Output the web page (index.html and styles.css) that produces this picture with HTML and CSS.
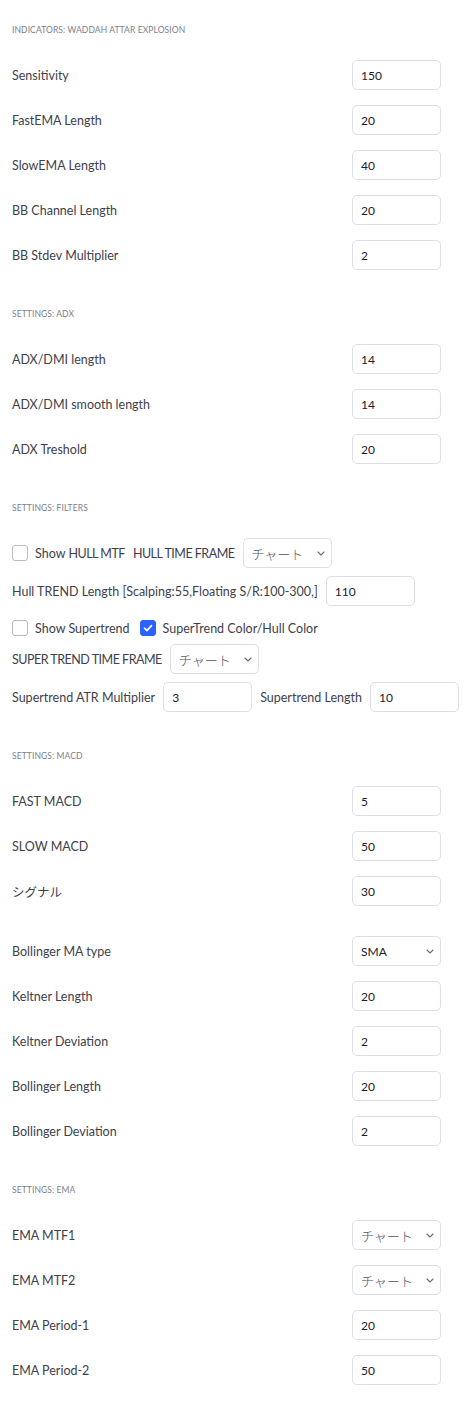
FILE: index.html
```html
<!DOCTYPE html>
<html lang="ja">
<head>
<meta charset="utf-8">
<title>Inputs</title>
<link rel="stylesheet" href="styles.css">
</head>
<body>
<div class="panel">

  <div class="section first">
    <div class="head">INDICATORS: WADDAH ATTAR EXPLOSION</div>
    <div class="rows">
      <div class="row"><span class="label">Sensitivity</span><div class="field">150</div></div>
      <div class="row"><span class="label">FastEMA Length</span><div class="field">20</div></div>
      <div class="row"><span class="label">SlowEMA Length</span><div class="field">40</div></div>
      <div class="row"><span class="label">BB Channel Length</span><div class="field">20</div></div>
      <div class="row"><span class="label">BB Stdev Multiplier</span><div class="field">2</div></div>
    </div>
  </div>

  <div class="section">
    <div class="head">SETTINGS: ADX</div>
    <div class="rows">
      <div class="row"><span class="label">ADX/DMI length</span><div class="field">14</div></div>
      <div class="row"><span class="label">ADX/DMI smooth length</span><div class="field">14</div></div>
      <div class="row"><span class="label">ADX Treshold</span><div class="field">20</div></div>
    </div>
  </div>

  <div class="section">
    <div class="head">SETTINGS: FILTERS</div>
    <div class="filters">
      <div class="inline">
        <span class="check"></span><span class="label">Show <span class="caps">HULL MTF</span></span>
        <span class="label caps">HULL TIME FRAME</span>
        <div class="field select"><span class="jp">チャート</span><svg class="chev" viewBox="0 0 8 5" width="8" height="5"><path d="M1 1l3 3 3-3" fill="none" stroke="#6a6d78" stroke-width="1.1" stroke-linecap="round" stroke-linejoin="round"/></svg></div>
      </div>
      <div class="inline">
        <span class="label">Hull TREND Length [Scalping:55,Floating S/R:100-300,]</span>
        <div class="field">110</div>
      </div>
      <div class="inline checks">
        <span class="check"></span><span class="label">Show Supertrend</span>
        <span class="check on"><svg viewBox="0 0 16 16" width="16" height="16"><path d="M4.5 8.2l2.4 2.4 4.6-5" fill="none" stroke="#fff" stroke-width="1.6" stroke-linecap="round" stroke-linejoin="round"/></svg></span><span class="label">SuperTrend Color/Hull Color</span>
      </div>
      <div class="inline tf">
        <span class="label caps">SUPER TREND TIME FRAME</span>
        <div class="field select"><span class="jp">チャート</span><svg class="chev" viewBox="0 0 8 5" width="8" height="5"><path d="M1 1l3 3 3-3" fill="none" stroke="#6a6d78" stroke-width="1.1" stroke-linecap="round" stroke-linejoin="round"/></svg></div>
      </div>
      <div class="inline">
        <span class="label">Supertrend ATR Multiplier</span>
        <div class="field">3</div>
        <span class="label">Supertrend Length</span>
        <div class="field">10</div>
      </div>
    </div>
  </div>

  <div class="section">
    <div class="head">SETTINGS: MACD</div>
    <div class="rows">
      <div class="row"><span class="label">FAST MACD</span><div class="field">5</div></div>
      <div class="row"><span class="label">SLOW MACD</span><div class="field">50</div></div>
      <div class="row"><span class="label">シグナル</span><div class="field">30</div></div>
    </div>
    <div class="rows gapped">
      <div class="row"><span class="label">Bollinger MA type</span><div class="field select"><span>SMA</span><svg class="chev" viewBox="0 0 8 5" width="8" height="5"><path d="M1 1l3 3 3-3" fill="none" stroke="#6a6d78" stroke-width="1.1" stroke-linecap="round" stroke-linejoin="round"/></svg></div></div>
      <div class="row"><span class="label">Keltner Length</span><div class="field">20</div></div>
      <div class="row"><span class="label">Keltner Deviation</span><div class="field">2</div></div>
      <div class="row"><span class="label">Bollinger Length</span><div class="field">20</div></div>
      <div class="row"><span class="label">Bollinger Deviation</span><div class="field">2</div></div>
    </div>
  </div>

  <div class="section">
    <div class="head">SETTINGS: EMA</div>
    <div class="rows">
      <div class="row"><span class="label">EMA MTF1</span><div class="field select"><span class="jp">チャート</span><svg class="chev" viewBox="0 0 8 5" width="8" height="5"><path d="M1 1l3 3 3-3" fill="none" stroke="#6a6d78" stroke-width="1.1" stroke-linecap="round" stroke-linejoin="round"/></svg></div></div>
      <div class="row"><span class="label">EMA MTF2</span><div class="field select"><span class="jp">チャート</span><svg class="chev" viewBox="0 0 8 5" width="8" height="5"><path d="M1 1l3 3 3-3" fill="none" stroke="#6a6d78" stroke-width="1.1" stroke-linecap="round" stroke-linejoin="round"/></svg></div></div>
      <div class="row"><span class="label">EMA Period-1</span><div class="field">20</div></div>
      <div class="row"><span class="label">EMA Period-2</span><div class="field">50</div></div>
    </div>
  </div>

</div>
</body>
</html>
```

FILE: styles.css
```css
* { box-sizing: border-box; }
html, body { margin: 0; padding: 0; background: #fff; }
body {
  font-family: "Lato", "Noto Sans CJK JP", sans-serif;
  font-size: 12.5px;
  color: #3e414b;
  width: 474px;
  height: 1419px;
  overflow: hidden;
}
.panel { padding: 20px 33px 0 12px; }
.section { margin-top: 34px; }
.section.first { margin-top: 0; }
.head {
  height: 20px;
  line-height: 20px;
  font-size: 8.5px;
  color: #7d808b;
  letter-spacing: 0.1px;
  margin-bottom: 20px;
}
.rows { display: flex; flex-direction: column; gap: 15px; }
.rows.gapped { margin-top: 30px; }
.row {
  display: flex;
  align-items: center;
  justify-content: space-between;
  height: 30px;
}
.label { white-space: nowrap; }
.caps { letter-spacing: -0.5px; }
.field {
  width: 89px;
  height: 30px;
  border: 1px solid #dcdfe6;
  border-radius: 5px;
  padding-left: 8px;
  display: flex;
  align-items: center;
  font-size: 12px;
  color: #1e2029;
  flex: none;
}
.field.select { justify-content: space-between; padding-right: 6px; }
.field.select .jp { font-size: 13px; color: #50535e; font-weight: 300; }
.chev { display: block; }
.filters { display: flex; flex-direction: column; }
.inline {
  display: flex;
  align-items: center;
  gap: 8px;
  height: 30px;
  margin-top: 8px;
}
.inline:first-child { margin-top: 0; }
.inline.checks { height: 22px; margin-top: 11px; }
.inline.tf { margin-top: 5px; }
.check {
  width: 16px;
  height: 16px;
  border: 1px solid #b8bbc4;
  border-radius: 3px;
  flex: none;
  margin-right: -1px;
}
.check.on { background: #2962ff; border-color: #2962ff; }
.check.on svg { display: block; margin: -1px; }
.inline .label + .check { margin-left: 2px; }
```
